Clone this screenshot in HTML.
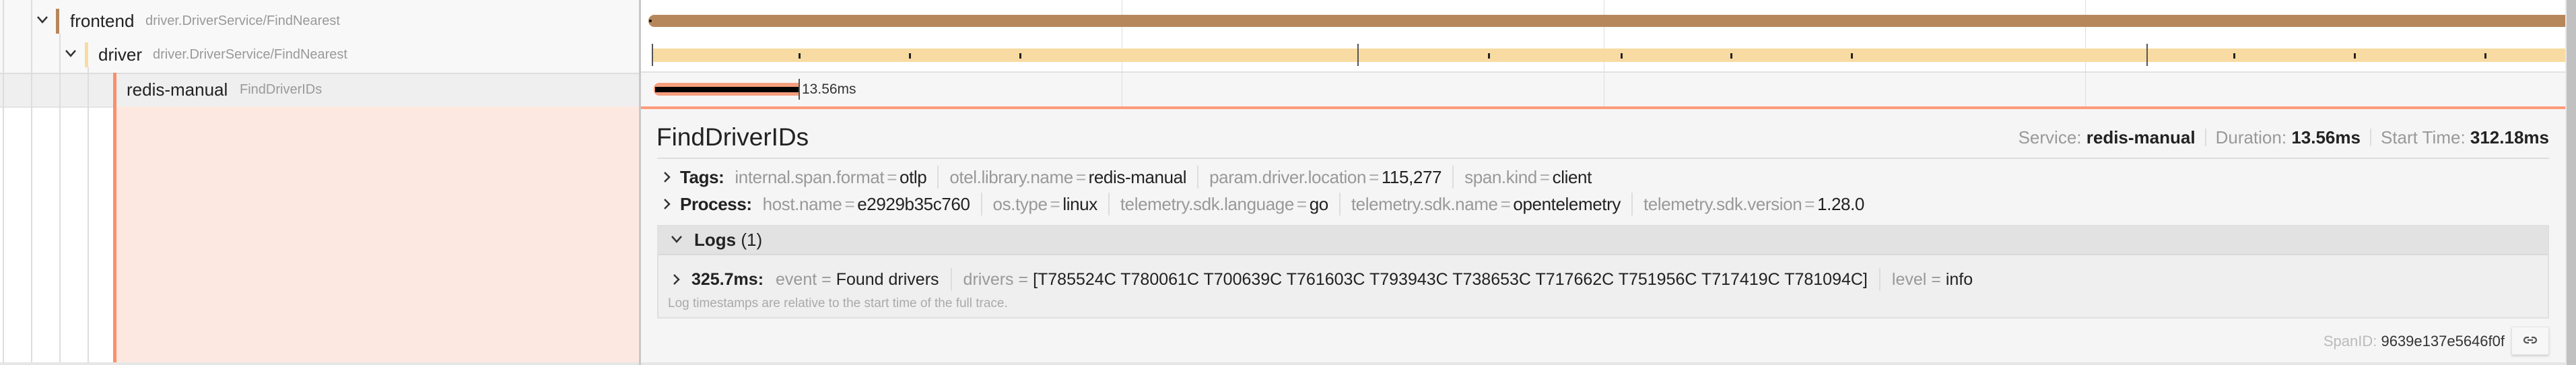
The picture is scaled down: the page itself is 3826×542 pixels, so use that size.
<!DOCTYPE html>
<html><head><meta charset="utf-8"><style>
*{margin:0;padding:0;box-sizing:border-box}
body{width:3826px;height:542px;overflow:hidden;background:#fff;font-family:"Liberation Sans",Arial,sans-serif;position:relative}
.a{position:absolute}
.vl{position:absolute;width:2px;background:#ddd}
.t{white-space:nowrap;position:absolute}
.k{color:#999}.v{color:#222}
.row{position:absolute;display:flex;align-items:center;white-space:nowrap;font-size:26px}
.tg{letter-spacing:-0.4px}
.eq{color:#aaa;margin:0 4px}
.sep{display:inline-block;width:2px;height:34px;background:#ddd;margin:0 16px}
.tick{position:absolute;width:3px;height:8px;background:#222;top:79px}
</style></head><body>
<!-- left panel -->
<div class="a" style="left:0;top:0;width:950px;height:108px;background:#f8f8f8"></div>
<div class="a" style="left:0;top:108px;width:950px;height:50px;background:#efefef;border-top:2px solid #ddd"></div>
<div class="a" style="left:0;top:158px;width:950px;height:2px;background:#e4e4e4"></div>
<div class="vl" style="left:4px;top:0;height:542px"></div>
<div class="vl" style="left:46px;top:0;height:542px"></div>
<div class="vl" style="left:88px;top:50px;height:492px"></div>
<div class="vl" style="left:130px;top:100px;height:442px"></div>
<div class="a" style="left:170px;top:158px;width:780px;height:380px;background:#fde8e1"></div>
<div class="a" style="left:168px;top:108px;width:5px;height:430px;background:#fd8f6a"></div>
<div class="a" style="left:0;top:538px;width:950px;height:4px;background:#e6e6e6"></div>
<!-- frontend row -->
<svg class="a" style="left:54px;top:22px" width="18" height="14"><path d="M2 3 L9 11 L16 3" stroke="#333" stroke-width="2.5" fill="none"/></svg>
<div class="a" style="left:83px;top:13px;width:5px;height:37px;background:#b7875c"></div>
<div class="t" style="left:104px;top:16px;font-size:26px;color:#222">frontend</div>
<div class="t" style="left:216px;top:20px;font-size:20px;color:#999">driver.DriverService/FindNearest</div>
<!-- driver row -->
<svg class="a" style="left:96px;top:72px" width="18" height="14"><path d="M2 3 L9 11 L16 3" stroke="#333" stroke-width="2.5" fill="none"/></svg>
<div class="a" style="left:126px;top:63px;width:5px;height:37px;background:#f8dba2"></div>
<div class="t" style="left:146px;top:66px;font-size:26px;color:#222">driver</div>
<div class="t" style="left:227px;top:70px;font-size:20px;color:#999">driver.DriverService/FindNearest</div>
<!-- redis row -->
<div class="t" style="left:188px;top:118px;font-size:26px;color:#222">redis-manual</div>
<div class="t" style="left:356px;top:122px;font-size:20px;color:#999">FindDriverIDs</div>
<!-- divider -->
<div class="a" style="left:949px;top:0;width:3px;height:542px;background:#c8c8c8"></div>

<!-- timeline -->
<div class="a" style="left:952px;top:0;width:2860px;height:106px;background:#fff"></div>
<div class="a" style="left:952px;top:106px;width:2860px;height:2px;background:#e2e2e2"></div>
<div class="a" style="left:952px;top:108px;width:2860px;height:50px;background:#f6f6f6"></div>
<div class="vl" style="left:1666px;top:0;height:158px;width:1px;background:#ddd"></div>
<div class="vl" style="left:2382px;top:0;height:158px;width:1px;background:#ddd"></div>
<div class="vl" style="left:3097px;top:0;height:158px;width:1px;background:#ddd"></div>
<div class="a" style="left:963px;top:22px;width:2848px;height:18px;background:#b7875c;border-radius:9px 0 0 9px"></div>
<div class="a" style="left:964px;top:29px;width:4px;height:4px;background:#111;border-radius:2px"></div>
<div class="a" style="left:969px;top:72px;width:2842px;height:20px;background:#f8dba2"></div>
<div class="a" style="left:968px;top:65px;width:2px;height:33px;background:#555"></div>
<div class="a" style="left:2016px;top:65px;width:2px;height:33px;background:#555"></div>
<div class="a" style="left:3188px;top:65px;width:2px;height:33px;background:#555"></div>
<div class="tick" style="left:1186px"></div><div class="tick" style="left:1350px"></div><div class="tick" style="left:1514px"></div>
<div class="tick" style="left:2210px"></div><div class="tick" style="left:2407px"></div><div class="tick" style="left:2570px"></div><div class="tick" style="left:2749px"></div>
<div class="tick" style="left:3317px"></div><div class="tick" style="left:3496px"></div><div class="tick" style="left:3690px"></div>
<div class="a" style="left:971px;top:123px;width:215px;height:19px;background:#f59e7d;border-radius:8px 0 0 8px"></div>
<div class="a" style="left:973px;top:129px;width:213px;height:8px;background:#000"></div>
<div class="a" style="left:1186px;top:117px;width:2px;height:31px;background:#555"></div>
<div class="t" style="left:1191px;top:121px;font-size:21px;color:#333">13.56ms</div>
<div class="a" style="left:952px;top:158px;width:2860px;height:4px;background:#fe9b79"></div>

<!-- detail -->
<div class="a" style="left:952px;top:162px;width:2860px;height:376px;background:#f5f5f5"></div>
<div class="a" style="left:952px;top:538px;width:2860px;height:4px;background:#e6e6e6"></div>
<div class="t" style="left:975px;top:183px;font-size:37px;color:#222">FindDriverIDs</div>
<div class="row" style="right:40px;top:188px;height:32px"><span class="k">Service:&nbsp;</span><b class="v">redis-manual</b><span class="sep" style="height:26px;margin:0 14px"></span><span class="k">Duration:&nbsp;</span><b class="v">13.56ms</b><span class="sep" style="height:26px;margin:0 14px"></span><span class="k">Start Time:&nbsp;</span><b class="v">312.18ms</b></div>
<div class="a" style="left:976px;top:234px;width:2810px;height:2px;background:#ddd"></div>

<div class="row tg" style="left:984px;top:246px;height:34px"><svg width="14" height="18" style="margin-right:12px"><path d="M3 2 L10 9 L3 16" stroke="#333" stroke-width="2.5" fill="none"/></svg><b class="v" style="margin-right:16px">Tags:</b><span class="k">internal.span.format</span><span class="eq">=</span><span class="v">otlp</span><span class="sep"></span><span class="k">otel.library.name</span><span class="eq">=</span><span class="v">redis-manual</span><span class="sep"></span><span class="k">param.driver.location</span><span class="eq">=</span><span class="v">115,277</span><span class="sep"></span><span class="k">span.kind</span><span class="eq">=</span><span class="v">client</span></div>
<div class="row tg" style="left:984px;top:286px;height:34px"><svg width="14" height="18" style="margin-right:12px"><path d="M3 2 L10 9 L3 16" stroke="#333" stroke-width="2.5" fill="none"/></svg><b class="v" style="margin-right:16px">Process:</b><span class="k">host.name</span><span class="eq">=</span><span class="v">e2929b35c760</span><span class="sep"></span><span class="k">os.type</span><span class="eq">=</span><span class="v">linux</span><span class="sep"></span><span class="k">telemetry.sdk.language</span><span class="eq">=</span><span class="v">go</span><span class="sep"></span><span class="k">telemetry.sdk.name</span><span class="eq">=</span><span class="v">opentelemetry</span><span class="sep"></span><span class="k">telemetry.sdk.version</span><span class="eq">=</span><span class="v">1.28.0</span></div>

<div class="a" style="left:976px;top:334px;width:2810px;height:139px;border:2px solid #e0e0e0;background:#efefef"></div>
<div class="a" style="left:978px;top:336px;width:2806px;height:43px;background:#e2e2e2;border-bottom:2px solid #d8d8d8"></div>
<svg class="a" style="left:996px;top:348px" width="18" height="14"><path d="M2 3 L9 11 L16 3" stroke="#333" stroke-width="2.5" fill="none"/></svg>
<div class="t" style="left:1031px;top:341px;font-size:26px;color:#222"><b>Logs</b> (1)</div>
<div class="row" style="left:998px;top:398px;height:34px;font-size:25px"><svg width="14" height="18" style="margin-right:15px"><path d="M3 2 L10 9 L3 16" stroke="#333" stroke-width="2.5" fill="none"/></svg><b class="v" style="margin-right:18px">325.7ms:</b><span class="k">event&nbsp;=&nbsp;</span><span class="v">Found drivers</span><span class="sep" style="margin:0 17px"></span><span class="k">drivers&nbsp;=&nbsp;</span><span class="v">[T785524C T780061C T700639C T761603C T793943C T738653C T717662C T751956C T717419C T781094C]</span><span class="sep" style="margin:0 17px"></span><span class="k">level&nbsp;=&nbsp;</span><span class="v">info</span></div>
<div class="t" style="left:992px;top:440px;font-size:19px;color:#aaa">Log timestamps are relative to the start time of the full trace.</div>

<div class="t" style="right:106px;top:494px;font-size:22px"><span style="color:#bbb">SpanID:</span> <span style="color:#333">9639e137e5646f0f</span></div>
<div class="a" style="left:3730px;top:485px;width:56px;height:42px;background:#f7f7f7;border:1px solid #e3e3e3;box-shadow:0 2px 3px rgba(0,0,0,.15);border-radius:2px"></div>
<svg class="a" style="left:3747px;top:498px" width="22" height="14"><path d="M9 3 H6 a4 4 0 0 0 0 8 H9 M13 3 H16 a4 4 0 0 1 0 8 H13 M7 7 H15" stroke="#555" stroke-width="2.2" fill="none"/></svg>

<!-- scrollbar -->
<div class="a" style="left:3812px;top:0;width:14px;height:542px;background:#c1c1c1"></div>
<div class="a" style="left:3810px;top:0;width:2px;height:542px;background:#e8e8e8"></div>
</body></html>
